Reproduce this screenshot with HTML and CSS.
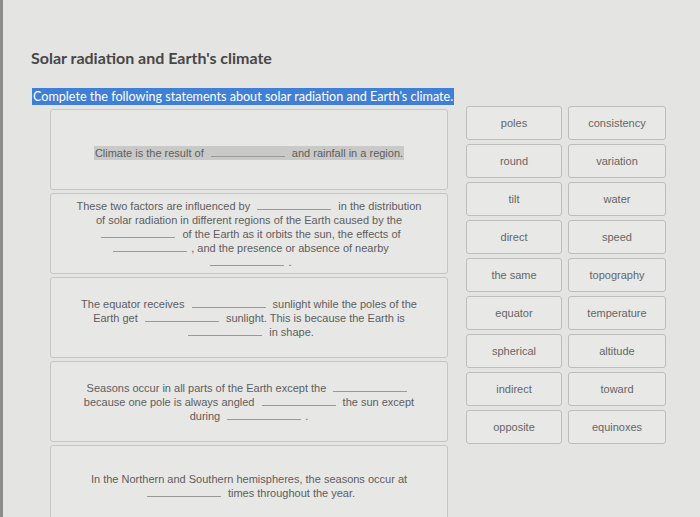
FILE: index.html
```html
<!DOCTYPE html>
<html lang="en">
<head>
<meta charset="utf-8">
<title>Solar radiation and Earth's climate</title>
<link rel="stylesheet" href="styles.css">
</head>
<body>
<div class="page">
  <h1 class="title">Solar radiation and Earth's climate</h1>
  <p class="instruction"><span class="sel">Complete the following statements about solar radiation and Earth's climate.</span></p>
  <div class="content">
    <div class="statements">
      <div class="box"><p class="stmt first"><span class="grey">Climate is the result of <span class="blank"></span> and rainfall in a region.</span></p></div>
      <div class="box"><p class="stmt">These two factors are influenced by <span class="blank"></span> in the distribution<br>of solar radiation in different regions of the Earth caused by the<br><span class="blank"></span> of the Earth as it orbits the sun, the effects of<br><span class="blank"></span>, and the presence or absence of nearby<br><span class="blank"></span>.</p></div>
      <div class="box"><p class="stmt">The equator receives <span class="blank"></span> sunlight while the poles of the<br>Earth get <span class="blank"></span> sunlight. This is because the Earth is<br><span class="blank"></span> in shape.</p></div>
      <div class="box"><p class="stmt">Seasons occur in all parts of the Earth except the <span class="blank"></span><br>because one pole is always angled <span class="blank"></span> the sun except<br>during <span class="blank"></span>.</p></div>
      <div class="box"><p class="stmt">In the Northern and Southern hemispheres, the seasons occur at<br><span class="blank"></span> times throughout the year.</p></div>
    </div>
    <div class="bank">
      <div class="tile">poles</div><div class="tile">consistency</div>
      <div class="tile">round</div><div class="tile">variation</div>
      <div class="tile">tilt</div><div class="tile">water</div>
      <div class="tile">direct</div><div class="tile">speed</div>
      <div class="tile">the same</div><div class="tile">topography</div>
      <div class="tile">equator</div><div class="tile">temperature</div>
      <div class="tile">spherical</div><div class="tile">altitude</div>
      <div class="tile">indirect</div><div class="tile">toward</div>
      <div class="tile">opposite</div><div class="tile">equinoxes</div>
    </div>
  </div>
</div>
</body>
</html>
```

FILE: styles.css
```css
html, body {
  margin: 0;
  padding: 0;
  height: 100%;
  overflow: hidden;
}
body {
  background: #e4e4e2;
  border-left: 3px solid #8c8c8a;
  font-family: "Liberation Sans", Arial, sans-serif;
  color: #5c5c5c;
}
.page {
  padding: 48px 0 0 28px;
}
.title {
  margin: 0;
  font-family: Lato, "Open Sans", sans-serif;
  font-weight: 700;
  font-size: 16px;
  line-height: 20px;
  color: #474747;
}
.instruction {
  margin: 20px 0 0 1px;
  font-family: Lato, "Open Sans", sans-serif;
  font-size: 12.6px;
  line-height: 18px;
}
.sel {
  background: #3f7fd6;
  color: #ffffff;
  padding: 1px 1px 1px 1px;
}
.content {
  display: flex;
  align-items: flex-start;
  margin-top: -1px;
}
.statements {
  margin: 4px 0 0 19px;
  width: 398px;
  display: flex;
  flex-direction: column;
  gap: 3px;
}
.box {
  height: 81px;
  box-sizing: border-box;
  border: 1px solid #c6c6c4;
  border-radius: 3px;
  background: #e7e7e5;
  display: flex;
  align-items: center;
  justify-content: center;
}
.stmt {
  margin: 0;
  text-align: center;
  font-size: 11px;
  line-height: 14px;
  color: #5e5e5e;
}
.stmt.first {
  margin-top: 6px;
}
.grey {
  background: #c9c9c7;
  padding: 1px 1px;
}
.blank {
  display: inline-block;
  width: 74px;
  height: 10px;
  margin: 0 4px;
  border-bottom: 1px solid #9a9a98;
  vertical-align: baseline;
}
.bank {
  margin: 1px 0 0 18px;
  display: grid;
  grid-template-columns: 96px 98px;
  grid-auto-rows: 34px;
  column-gap: 6px;
  row-gap: 4px;
}
.tile {
  box-sizing: border-box;
  border: 1px solid #bdbdbb;
  border-radius: 3px;
  background: #e8e8e6;
  display: flex;
  align-items: center;
  justify-content: center;
  font-size: 11px;
  color: #666666;
}
```
